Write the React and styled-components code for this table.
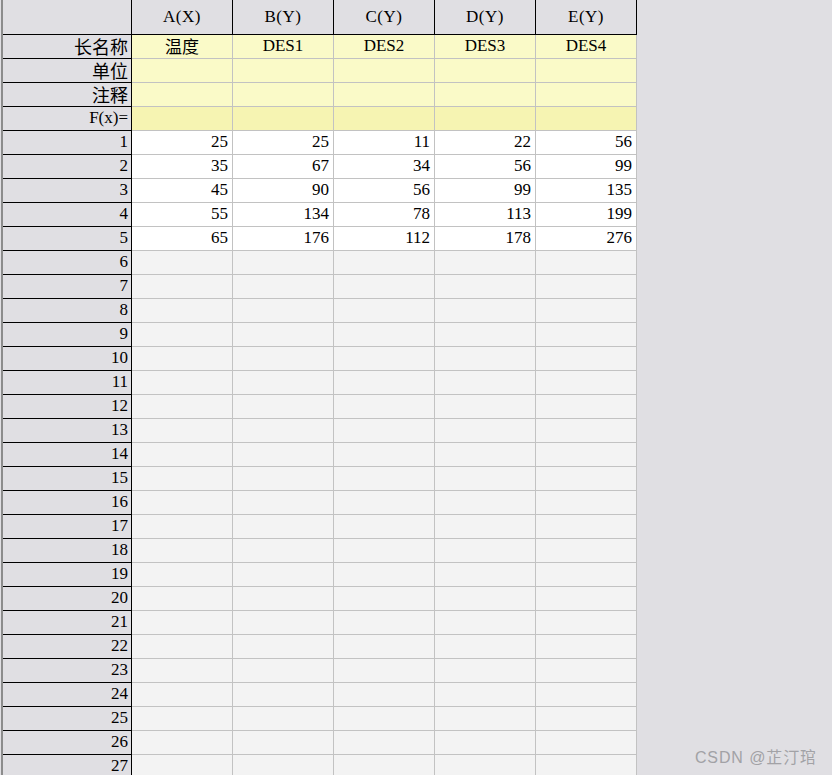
import React from "react";
import styled, { createGlobalStyle } from "styled-components";

const Global = createGlobalStyle`
  html, body { margin: 0; padding: 0; background: #e0dfe3; overflow: hidden; }
  body { width: 832px; height: 775px; }
`;

const Page = styled.div`
  position: relative;
  width: 832px;
  height: 775px;
  overflow: hidden;
  background: #e0dfe3;
  padding-left: 1px;
  box-sizing: border-box;
`;

const Sheet = styled.div`
  display: grid;
  grid-template-columns: 129px repeat(5, 101px);
  grid-template-rows: 35px;
  grid-auto-rows: 24px;
  width: max-content;
  border-left: 2px solid #8c8c8c;
  font-family: "Liberation Serif", "Noto Sans CJK SC", serif;
  font-size: 17px;
  color: #000;
`;

const Corner = styled.div`
  background: #e0dfe3;
  border-right: 1px solid #000;
  border-bottom: 1px solid #000;
  box-sizing: border-box;
`;

const ColHead = styled.div`
  background: #e0dfe3;
  border-right: 1px solid #000;
  border-bottom: 1px solid #000;
  box-sizing: border-box;
  display: flex;
  align-items: center;
  justify-content: center;
  padding-bottom: 1px;
  letter-spacing: 0.5px;
`;

const RowHead = styled.div`
  background: #e0dfe3;
  border-right: 1px solid #000;
  border-bottom: 1px solid #000;
  box-sizing: border-box;
  display: flex;
  align-items: center;
  justify-content: flex-end;
  padding-right: 3px;
  padding-bottom: 2px;
  white-space: nowrap;
  font-size: ${(p) => (p.$cjk ? "18px" : "17px")};
`;

const Cell = styled.div`
  background: ${(p) =>
    p.$kind === "label" ? "#fafac8" : p.$kind === "formula" ? "#f6f4b2" : p.$kind === "data" ? "#ffffff" : "#f3f3f3"};
  border-right: 1px solid #c2c2c2;
  border-bottom: 1px solid #c2c2c2;
  box-sizing: border-box;
  display: flex;
  align-items: center;
  justify-content: ${(p) => (p.$center ? "center" : "flex-end")};
  padding-right: ${(p) => (p.$center ? "0" : "4px")};
  padding-bottom: 2px;
  white-space: nowrap;
`;

const Watermark = styled.div`
  position: absolute;
  right: 15px;
  bottom: 7px;
  font-family: "Liberation Sans", "Noto Sans CJK SC", sans-serif;
  font-size: 16px;
  letter-spacing: 0.9px;
  color: #a2a2a6;
`;

const columns = ["A(X)", "B(Y)", "C(Y)", "D(Y)", "E(Y)"];
const longNames = ["温度", "DES1", "DES2", "DES3", "DES4"];
const data = [
  [25, 25, 11, 22, 56],
  [35, 67, 34, 56, 99],
  [45, 90, 56, 99, 135],
  [55, 134, 78, 113, 199],
  [65, 176, 112, 178, 276],
];

export default function App() {
  const rows = [];
  for (let i = 1; i <= 27; i++) rows.push(i);
  return (
    <Page>
      <Global />
      <Sheet>
        <Corner />
        {columns.map((c) => (
          <ColHead key={c}>{c}</ColHead>
        ))}

        <RowHead $cjk>长名称</RowHead>
        {longNames.map((n) => (
          <Cell key={n} $kind="label" $center>
            {n}
          </Cell>
        ))}

        <RowHead $cjk>单位</RowHead>
        {columns.map((c) => (
          <Cell key={c} $kind="label" />
        ))}

        <RowHead $cjk>注释</RowHead>
        {columns.map((c) => (
          <Cell key={c} $kind="label" />
        ))}

        <RowHead>F(x)=</RowHead>
        {columns.map((c) => (
          <Cell key={c} $kind="formula" />
        ))}

        {rows.map((r) => (
          <React.Fragment key={r}>
            <RowHead>{r}</RowHead>
            {columns.map((c, ci) => {
              const v = data[r - 1];
              return (
                <Cell key={c} $kind={v ? "data" : "empty"}>
                  {v ? v[ci] : ""}
                </Cell>
              );
            })}
          </React.Fragment>
        ))}
      </Sheet>
      <Watermark>CSDN @芷汀琯</Watermark>
    </Page>
  );
}
